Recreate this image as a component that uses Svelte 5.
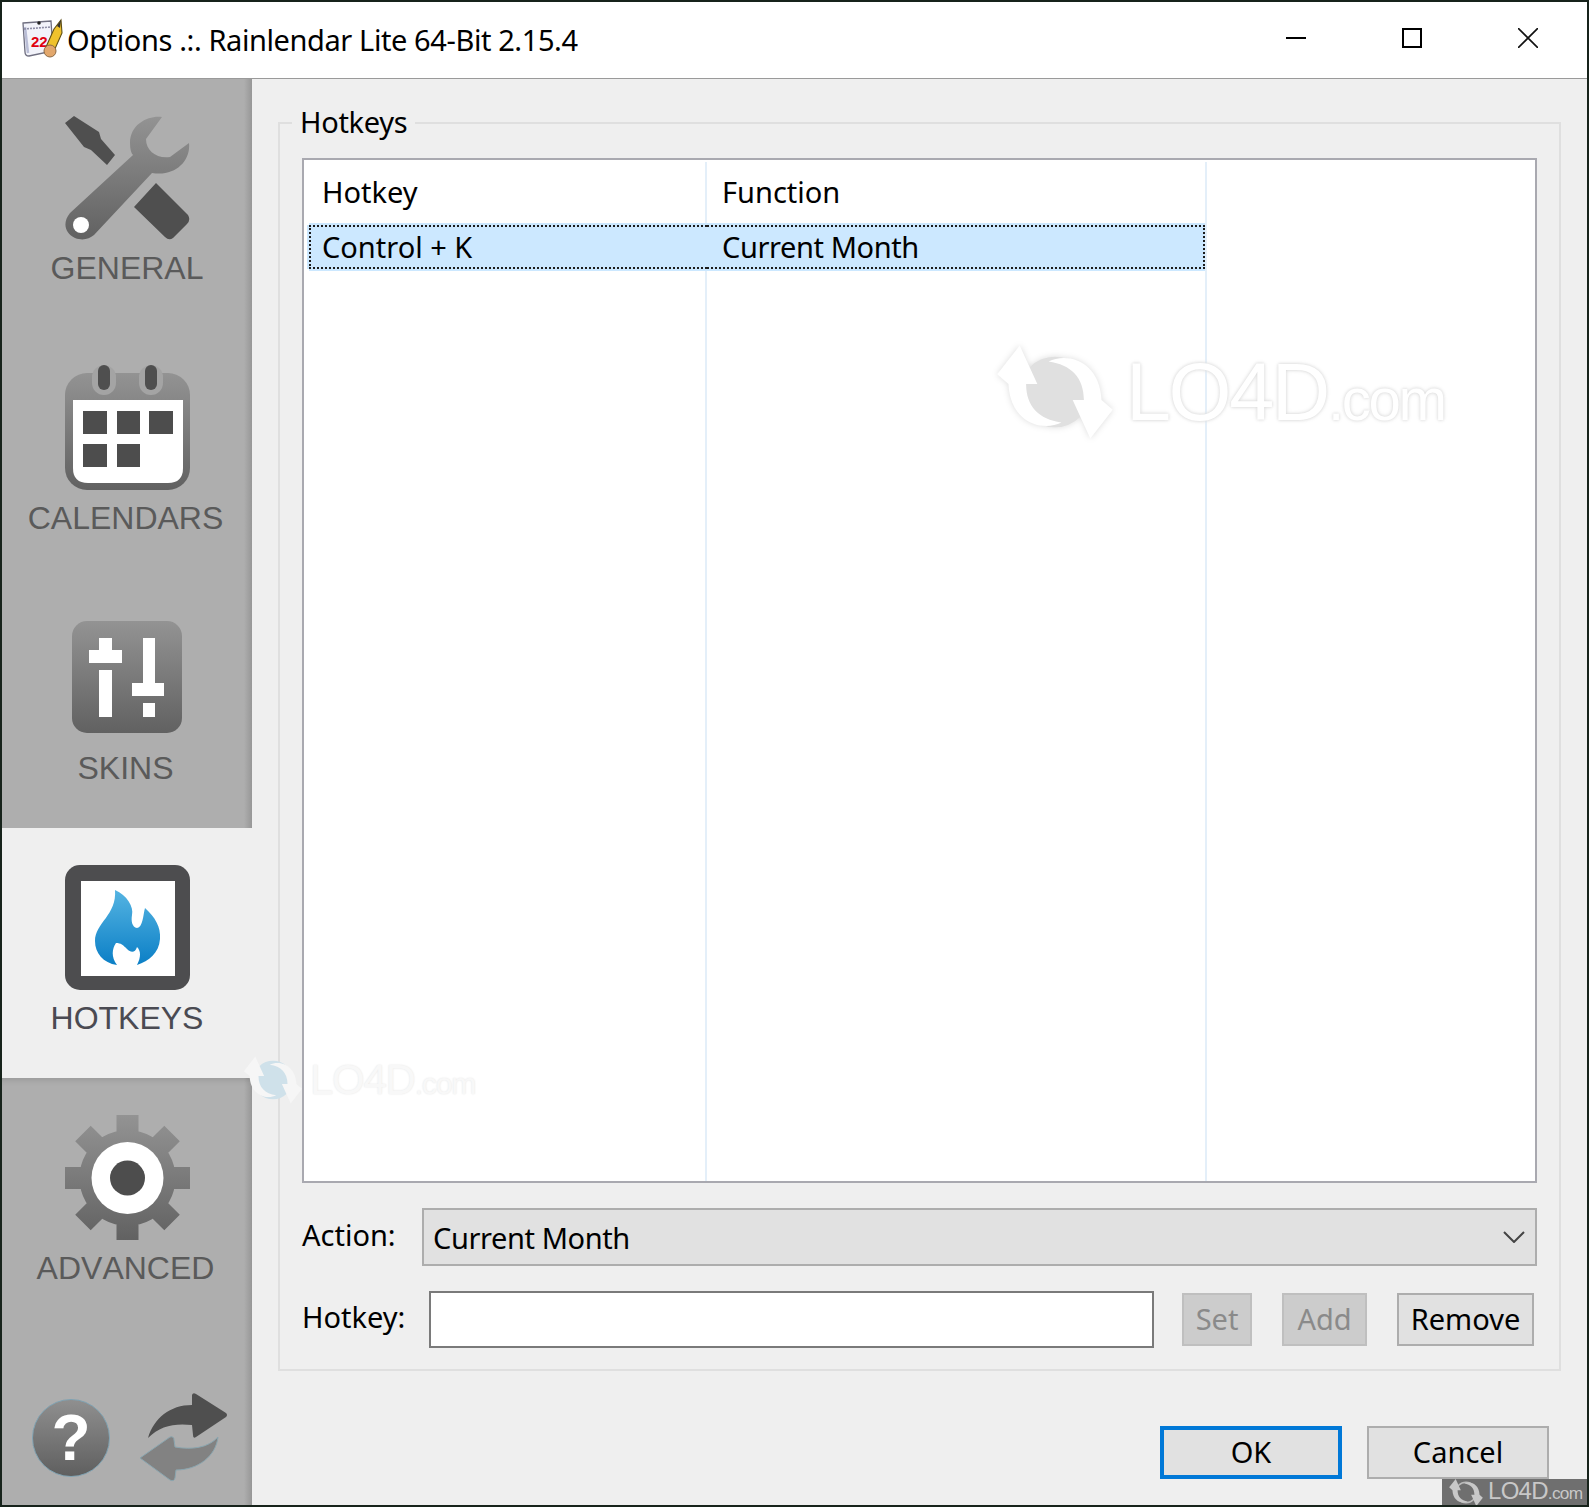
<script lang="ts">
    // eight teeth around the hub, joined into one path so the gradient runs over the whole gear
    const gearPath = [0, 45, 90, 135, 180, 225, 270, 315]
        .map((deg) => {
            const a = (deg * Math.PI) / 180
            const corners = [[-11, -63], [11, -63], [11, -30], [-11, -30]].map(([x, y]) => {
                const px = 62.5 + x * Math.cos(a) - y * Math.sin(a)
                const py = 63 + x * Math.sin(a) + y * Math.cos(a)
                return `${px.toFixed(1)} ${py.toFixed(1)}`
            })
            return `M${corners.join(' L')} Z`
        })
        .join(' ')
</script>

{#snippet arrows(fill)}
    <path d="M2 20 L16 2 L27 26 L20 26 C20 40 28 48 42 50 C30 56 10 50 9 26 Z" fill={fill} />
    <path d="M74 42 L60 60 L49 36 L56 36 C56 22 48 14 34 12 C46 6 66 12 67 36 Z" fill={fill} />
{/snippet}

<div class="window">
    <header class="titlebar">
        <svg class="app-icon" viewBox="0 0 44 42" width="44" height="42">
            <path d="M3 6 L31 4 L33 34 L9 39 Q5 39 5 35 Z" fill="#f2f3fa" stroke="#6f6f80" stroke-width="1.3" />
            <path d="M5 10 L8 36" stroke="#b9bdd6" stroke-width="2.5" />
            <path d="M4 12 L31 10" stroke="#8d8da6" stroke-width="1.6" stroke-dasharray="2 1" />
            <circle cx="19" cy="6" r="1.8" fill="#222" />
            <text x="11" y="30" class="app-day">22</text>
            <path d="M41 3 L42 16 L34 34 L26 30 L34 12 Z" fill="#efc22c" stroke="#5e4e14" stroke-width="1.1" />
            <path d="M41 3 L37 9 L40 11 Z" fill="#333" />
            <circle cx="30" cy="34" r="6" fill="#e2a76c" stroke="#8c6a45" stroke-width="1" />
        </svg>
        <span class="title">Options .:. Rainlendar Lite 64-Bit 2.15.4</span>
        <div class="controls">
            <svg viewBox="0 0 20 20" width="20" height="20"><path d="M0 10 H20" stroke="#000" stroke-width="2" /></svg>
            <svg viewBox="0 0 20 20" width="20" height="20"><rect x="1" y="1" width="18" height="18" fill="none" stroke="#000" stroke-width="2" /></svg>
            <svg viewBox="0 0 20 20" width="20" height="20"><path d="M0 0 L20 20 M20 0 L0 20" stroke="#111" stroke-width="1.6" /></svg>
        </div>
    </header>

    <div class="content">
        <nav class="sidebar">
            <div class="item first">
                <svg class="icon" viewBox="0 0 125 125" width="125" height="125">
                    <defs>
                        <linearGradient id="metal" x1="0" y1="0" x2="0" y2="1">
                            <stop offset="0" stop-color="#939393" />
                            <stop offset="1" stop-color="#616161" />
                        </linearGradient>
                        <linearGradient id="flame" x1="0" y1="0" x2="0" y2="1">
                            <stop offset="0" stop-color="#55b4e2" />
                            <stop offset="1" stop-color="#0b7fc6" />
                        </linearGradient>
                    </defs>
                    <path d="M0 8 L9 1 L34 17 L36 24 L50 40 L42 50 L26 35 L19 32 Z" fill="#4f4f4f" />
                    <path d="M97 2 C85 0 65 8 65 28 C65 34 66 38 68 40 L5 98 C-3 108 0 118 10 123 C18 126 24 124 29 120 L87 58 C110 62 126 46 124 28 L105 42 C92 44 81 36 81 24 Z" fill="url(#metal)" />
                    <circle cx="16" cy="110" r="8" fill="#fff" />
                    <path d="M91 68 L123 100 Q126 105 122 109 L108 123 Q104 126 100 122 L69 92 Z" fill="#4f4f4f" />
                </svg>
                <span class="label">GENERAL</span>
            </div>

            <div class="item">
                <svg class="icon" viewBox="0 0 125 125" width="125" height="125">
                    <rect x="0" y="8" width="125" height="117" rx="22" fill="url(#metal)" />
                    <rect x="27" y="0" width="24" height="30" rx="12" fill="#a4a4a4" />
                    <rect x="74" y="0" width="24" height="30" rx="12" fill="#a4a4a4" />
                    <rect x="33" y="0" width="12" height="25" rx="6" fill="#4f4f4f" />
                    <rect x="80" y="0" width="12" height="25" rx="6" fill="#4f4f4f" />
                    <path d="M8 35 H118 V103 Q118 118 103 118 H23 Q8 118 8 103 Z" fill="#fff" />
                    <rect x="18" y="46" width="24" height="23" fill="#4d4d4d" />
                    <rect x="52" y="46" width="23" height="23" fill="#4d4d4d" />
                    <rect x="84" y="46" width="24" height="23" fill="#4d4d4d" />
                    <rect x="18" y="79" width="24" height="23" fill="#4d4d4d" />
                    <rect x="52" y="79" width="23" height="23" fill="#4d4d4d" />
                </svg>
                <span class="label">CALENDARS</span>
            </div>

            <div class="item">
                <svg class="icon" viewBox="0 0 125 125" width="125" height="125">
                    <rect x="7" y="6" width="110" height="112" rx="15" fill="url(#metal)" />
                    <path d="M34 23 H47 V35 H57 V48 H24 V35 H34 Z M34 55 H47 V102 H34 Z" fill="#fff" />
                    <path d="M78 23 H90 V68 H99 V81 H67 V68 H78 Z M78 88 H90 V102 H78 Z" fill="#fff" />
                </svg>
                <span class="label">SKINS</span>
            </div>

            <div class="item active">
                <svg class="icon" viewBox="0 0 125 125" width="125" height="125">
                    <rect x="0" y="0" width="125" height="125" rx="15" fill="#4d4d4f" />
                    <rect x="16" y="16" width="94" height="95" fill="#fff" />
                    <path d="M50 25 C62 30 69 42 67 50 C66 56 67 62 72 63 C78 62 78 50 80 43 C90 52 96 62 95 74 C94 88 84 96 72 100 C76 92 76 86 72 82 C70 88 66 88 62 84 C58 80 56 78 51 78 C47 84 46 92 52 100 C38 98 30 88 30 76 C30 58 52 50 50 25 Z" fill="url(#flame)" />
                </svg>
                <span class="label">HOTKEYS</span>
            </div>

            <div class="item">
                <svg class="icon" viewBox="0 0 125 125" width="125" height="125">
                    <path d="{gearPath} M62.5 15 A48 48 0 1 1 62.4 15 Z" fill="url(#metal)" />
                    <circle cx="62.5" cy="63" r="36" fill="#fff" />
                    <circle cx="62.5" cy="63" r="17.5" fill="#4d4d4d" />
                </svg>
                <span class="label">ADVANCED</span>
                <div class="tools">
                    <div class="help">?</div>
                    <svg viewBox="0 0 96 96" width="96" height="96">
                        <path d="M12 48 C18 28 34 15 56 15 L56 5 Q57 2 60 4 L90 23 Q92 25 90 27 L60 47 Q57 49 57 45 L56 35 C38 33 24 36 12 48 Z" fill="#4f4f4f" />
                        <path d="M4 68 L34 47 Q38 46 38 50 L39 57 C56 60 72 58 82 47 C80 66 62 80 40 80 L39 88 Q38 92 34 90 Z" fill="#828282" stroke="#8aa6b0" stroke-width="1" />
                    </svg>
                </div>
            </div>
        </nav>

        <main class="panel">
            <section class="group">
                <span class="legend">Hotkeys</span>
                <div class="list">
                    <div class="col first-col">
                        <div class="head">Hotkey</div>
                        <div class="cell left">Control + K</div>
                    </div>
                    <div class="col second-col">
                        <div class="head">Function</div>
                        <div class="cell right"><span class="tight">Current Month</span></div>
                    </div>
                </div>

                <div class="row action-row">
                    <span class="field-label action-label">Action:</span>
                    <div class="combo">
                        <span class="tight">Current Month</span>
                        <svg viewBox="0 0 22 12" width="22" height="12"><path d="M1 1 L11 11 L21 1" fill="none" stroke="#444" stroke-width="2" /></svg>
                    </div>
                </div>

                <div class="row key-row">
                    <span class="field-label key-label">Hotkey:</span>
                    <div class="input"></div>
                    <button class="btn off set">Set</button>
                    <button class="btn off add">Add</button>
                    <button class="btn remove">Remove</button>
                </div>
            </section>

            <footer class="footer">
                <button class="btn big ok">OK</button>
                <button class="btn big">Cancel</button>
            </footer>
        </main>
    </div>

    <div class="mark mark-large">
        <svg viewBox="0 0 76 62" width="122" height="100">
            <circle cx="38" cy="31" r="22" fill="#e0e0e0" />
            {@render arrows('#fff')}
        </svg>
        <span class="mark-text">LO4D<small>.com</small></span>
    </div>

    <div class="mark mark-small">
        <svg viewBox="0 0 76 62" width="62" height="50">
            <circle cx="38" cy="31" r="24" fill="#cfe1ea" />
            {@render arrows('#f6f6f6')}
        </svg>
        <span class="mark-text">LO4D<small>.com</small></span>
    </div>

    <div class="mark mark-corner">
        <svg viewBox="0 0 76 62" width="36" height="29">
            <circle cx="38" cy="31" r="22" fill="#6f6f6f" stroke="#bbb" stroke-width="3" />
            {@render arrows('#c8c8c8')}
        </svg>
        <span class="mark-text">LO4D<small>.com</small></span>
    </div>
</div>

<style>
    :global(body) {
        margin: 0;
        background: #17231b;
    }

    .window {
        position: relative;
        box-sizing: border-box;
        width: 1585px;
        height: 1503px;
        margin: 2px 0 0 2px;
        background: #efefef;
        display: flex;
        flex-direction: column;
        overflow: hidden;
        font-family: "Noto Sans", sans-serif;
        font-size: 29px;
        color: #000;
    }

    .titlebar {
        box-sizing: border-box;
        height: 77px;
        flex: none;
        background: #fff;
        border-bottom: 1px solid #9a9a9a;
        display: flex;
        align-items: center;
        padding-left: 18px;
    }

    .app-icon {
        flex: none;
        margin: -4px 3px 0 0;
    }

    .app-day {
        font-family: "Liberation Sans", sans-serif;
        font-size: 15px;
        font-weight: 700;
        fill: #e00010;
    }

    .title {
        white-space: nowrap;
        letter-spacing: -0.4px;
        margin-top: -2px;
    }

    .controls {
        margin-left: auto;
        margin-right: 49px;
        margin-top: -4px;
        display: flex;
        gap: 96px;
    }

    .content {
        flex: 1;
        display: flex;
        min-height: 0;
    }

    .sidebar {
        width: 250px;
        flex: none;
        background: linear-gradient(90deg, #aeaeae 96.8%, #979797 100%);
        font-family: "Liberation Sans", sans-serif;
    }

    .item {
        box-sizing: border-box;
        height: 250px;
        padding-top: 37px;
        display: flex;
        flex-direction: column;
        align-items: center;
        position: relative;
    }

    .item.first {
        height: 249px;
        padding-top: 36px;
    }

    .item.active {
        background: #efefef;
    }

    .item:last-child {
        height: 427px;
        box-shadow: inset 0 7px 7px -6px rgba(0, 0, 0, 0.16);
    }

    .icon {
        display: block;
        flex: none;
    }

    .label {
        margin: 10px 3px 0 0;
        font-size: 32px;
        line-height: 36px;
        font-kerning: none;
        color: #5a5a5a;
    }

    .item.first .label {
        margin-top: 10px;
        margin-right: 0;
    }

    .item.active .label {
        color: #4a4a52;
        margin-right: 0;
    }

    .tools {
        position: absolute;
        left: 30px;
        top: 312px;
        display: flex;
        align-items: center;
        gap: 26px;
    }

    .help {
        box-sizing: border-box;
        width: 78px;
        height: 78px;
        border-radius: 50%;
        border: 1px solid #7fa2b2;
        background: linear-gradient(#8f8f8f, #5f5f5f);
        color: #fff;
        font-size: 64px;
        font-weight: 700;
        line-height: 76px;
        text-align: center;
    }

    .panel {
        flex: 1;
        min-width: 0;
        padding: 43px 26px 0;
    }

    .group {
        position: relative;
        box-sizing: border-box;
        height: 1249px;
        border: 2px solid #dfdfdf;
        padding: 34px 22px 0;
    }

    .legend {
        position: absolute;
        left: 12px;
        top: -22px;
        padding: 0 8px;
        background: #efefef;
        line-height: 40px;
        letter-spacing: -0.3px;
    }

    .list {
        box-sizing: border-box;
        height: 1025px;
        border: 2px solid #a9a9b0;
        background: #fff;
        padding: 2px 0 0 5px;
        display: flex;
    }

    .col {
        box-sizing: border-box;
        border-right: 2px solid #e4eff9;
    }

    .first-col {
        width: 398px;
    }

    .second-col {
        width: 500px;
    }

    .head {
        height: 61px;
        padding-left: 13px;
        line-height: 60px;
    }

    .cell {
        box-sizing: border-box;
        height: 44px;
        margin-top: 2px;
        background: #cce8ff;
        box-shadow: 0 -2px 0 #cce8ff, 0 2px 0 #cce8ff;
        border-top: 2px dotted #1c1c1c;
        border-bottom: 2px dotted #1c1c1c;
        line-height: 40px;
    }

    .cell.left {
        margin-right: -2px;
        border-left: 2px dotted #1c1c1c;
        padding-left: 11px;
        box-shadow: 0 -2px 0 #cce8ff, 0 2px 0 #cce8ff, -2px 0 0 #cce8ff;
    }

    .cell.right {
        border-right: 2px dotted #1c1c1c;
        padding-left: 15px;
    }

    .second-col .head {
        padding-left: 15px;
    }

    .tight {
        letter-spacing: -0.4px;
    }

    .row {
        display: flex;
        align-items: center;
    }

    .action-row {
        margin-top: 25px;
    }

    .key-row {
        margin-top: 25px;
    }

    .field-label {
        flex: none;
        margin-top: -6px;
    }

    .action-label {
        width: 120px;
    }

    .key-label {
        width: 127px;
    }

    .combo {
        box-sizing: border-box;
        flex: 1;
        height: 58px;
        background: #e1e1e1;
        border: 2px solid #adadad;
        display: flex;
        align-items: center;
        justify-content: space-between;
        padding: 0 10px 0 9px;
    }

    .input {
        box-sizing: border-box;
        width: 725px;
        height: 57px;
        flex: none;
        background: #fff;
        border: 2px solid #7a7a7a;
    }

    .btn {
        box-sizing: border-box;
        flex: none;
        height: 53px;
        padding: 0 0 2px;
        background: #e1e1e1;
        border: 2px solid #adadad;
        font: inherit;
        color: #000;
    }

    .btn.off {
        background: #cccccc;
        border-color: #bfbfbf;
        color: #8a8a8a;
    }

    .set {
        width: 70px;
        margin-left: 28px;
    }

    .add {
        width: 85px;
        margin-left: 30px;
    }

    .remove {
        width: 137px;
        margin-left: 30px;
    }

    .footer {
        margin-top: 55px;
        margin-right: 12px;
        display: flex;
        justify-content: flex-end;
        gap: 25px;
    }

    .big {
        width: 182px;
    }

    .ok {
        border: 4px solid #0078d7;
    }

    .mark {
        position: absolute;
        display: flex;
        align-items: center;
        font-family: "Liberation Sans", sans-serif;
        pointer-events: none;
    }

    .mark small {
        font-size: 0.72em;
    }

    .mark-text {
        letter-spacing: -0.03em;
    }

    .mark-large {
        left: 992px;
        top: 340px;
        gap: 10px;
        font-size: 81px;
        color: #fff;
        text-shadow: 0 0 3px #d8d8d8, 0 0 5px #e8e8e8;
    }

    .mark-large svg {
        filter: drop-shadow(0 0 3px #dcdcdc);
    }

    .mark-small {
        left: 240px;
        top: 1053px;
        gap: 6px;
        font-size: 42px;
        color: #f8f8f8;
        text-shadow: 0 0 2px #e4e4e4;
    }

    .mark-corner {
        left: 1440px;
        top: 1477px;
        box-sizing: border-box;
        width: 145px;
        height: 26px;
        padding-left: 6px;
        gap: 4px;
        background: #6f6f6f;
        color: #c8c8c8;
        font-size: 24px;
        line-height: 26px;
    }
</style>
